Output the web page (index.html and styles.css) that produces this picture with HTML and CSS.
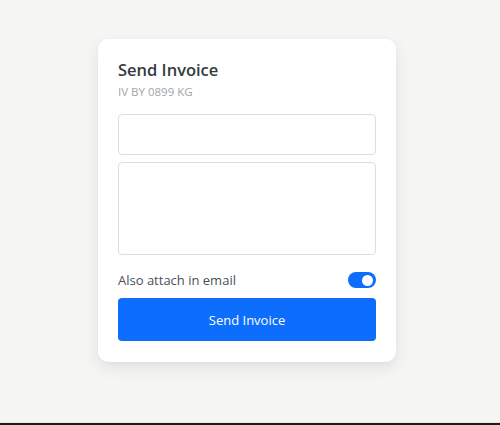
FILE: index.html
```html
<!DOCTYPE html>
<html>
<head>
<meta charset="utf-8">
<link rel="stylesheet" href="styles.css">
</head>
<body>
<div class="page">
  <div class="card">
    <h1 class="title">Send Invoice</h1>
    <div class="sub">IV BY 0899 KG</div>
    <input class="field" type="text">
    <textarea class="field area"></textarea>
    <div class="row">
      <span class="label">Also attach in email</span>
      <span class="toggle"><span class="knob"></span></span>
    </div>
    <button class="btn">Send Invoice</button>
  </div>
</div>
<div class="bar"></div>
</body>
</html>
```

FILE: styles.css
```css
html, body {
  margin: 0;
  padding: 0;
  background: #f5f5f3;
  font-family: "Open Sans", "Noto Sans", "Liberation Sans", sans-serif;
}
.page {
  height: 423px;
  box-sizing: border-box;
  display: flex;
  justify-content: center;
  align-items: flex-start;
  padding-top: 39px;
  padding-right: 6px;
  border-bottom: 1px solid #e6e6e4;
}
.bar {
  height: 2px;
  background: #1c1c1c;
}
.card {
  width: 298px;
  box-sizing: border-box;
  background: #fff;
  border-radius: 10px;
  padding: 20px 20px 21px;
  box-shadow: 0 6px 14px rgba(60, 80, 90, 0.10), 0 1px 3px rgba(0,0,0,0.04);
  display: flex;
  flex-direction: column;
}
.title {
  margin: 0;
  font-size: 16.5px;
  line-height: 22px;
  font-weight: 600;
  color: #343a40;
}
.sub {
  font-size: 11.5px;
  line-height: 15px;
  color: #a0a5aa;
  margin-top: 3px;
  margin-bottom: 15px;
}
.field {
  display: block;
  box-sizing: border-box;
  width: 100%;
  height: 41px;
  border: 1px solid #dcdfe2;
  border-radius: 4px;
  margin: 0;
  padding: 0;
  font: inherit;
  background: #fff;
}
.area {
  height: 93px;
  margin-top: 7px;
  resize: none;
}
.row {
  display: flex;
  justify-content: space-between;
  align-items: center;
  margin-top: 15px;
  height: 20px;
}
.label {
  font-size: 13px;
  color: #495057;
}
.toggle {
  width: 28px;
  height: 16px;
  border-radius: 8px;
  background: #0d6efd;
  display: flex;
  align-items: center;
  justify-content: flex-end;
  padding: 0 3px;
  box-sizing: border-box;
}
.knob {
  width: 11px;
  height: 11px;
  border-radius: 50%;
  background: #fff;
}
.btn {
  margin-top: 8px;
  height: 43px;
  border: 0;
  border-radius: 4px;
  background: #0d6efd;
  color: #fff;
  font: inherit;
  font-size: 13px;
}
```
